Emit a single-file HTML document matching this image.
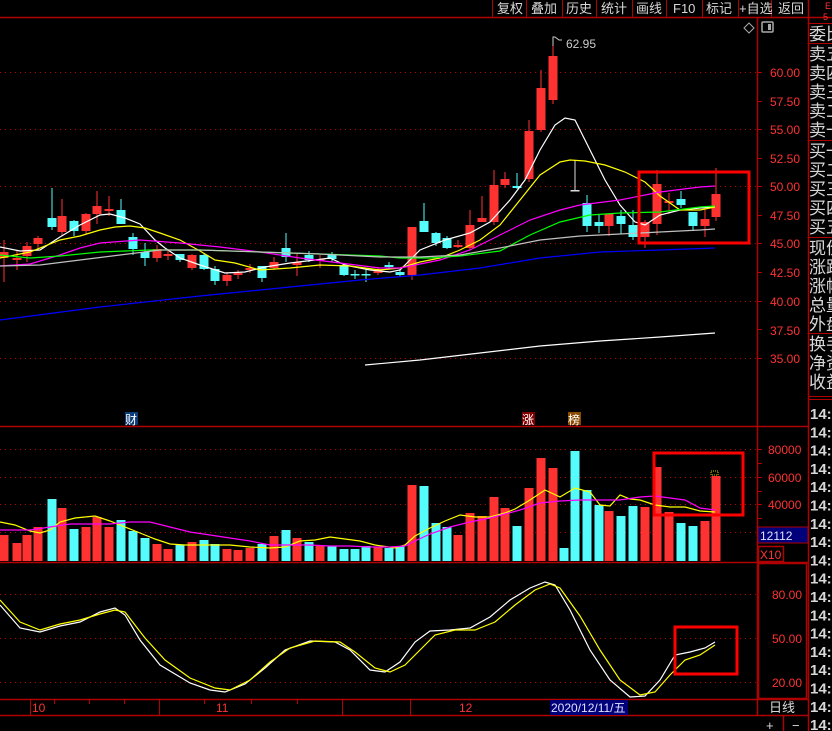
<!DOCTYPE html>
<html><head><meta charset="utf-8">
<style>
html,body{margin:0;padding:0;background:#000;width:832px;height:731px;overflow:hidden}
svg{display:block}
text{font-family:"Liberation Sans","Noto Sans CJK SC",sans-serif}
</style></head><body>
<svg id="s" width="832" height="731" viewBox="0 0 832 731" xmlns="http://www.w3.org/2000/svg">
<rect width="832" height="731" fill="#000"/>
<g id="grid" stroke="#c00000" stroke-width="1" stroke-dasharray="1,4">
<line x1="0" y1="72.5" x2="757" y2="72.5"/><line x1="0" y1="129.5" x2="757" y2="129.5"/>
<line x1="0" y1="186.5" x2="757" y2="186.5"/><line x1="0" y1="243.5" x2="757" y2="243.5"/>
<line x1="0" y1="301.5" x2="757" y2="301.5"/><line x1="0" y1="358.5" x2="757" y2="358.5"/>
<line x1="0" y1="449.5" x2="757" y2="449.5"/><line x1="0" y1="477.5" x2="757" y2="477.5"/>
<line x1="0" y1="504.5" x2="757" y2="504.5"/><line x1="0" y1="532.5" x2="757" y2="532.5"/>
<line x1="0" y1="594.5" x2="757" y2="594.5"/><line x1="0" y1="638.5" x2="757" y2="638.5"/>
<line x1="0" y1="682.5" x2="757" y2="682.5"/>
</g>
<g id="cand"></g>
<g id="lines" fill="none" stroke-width="1.2"></g>
<g stroke="#b00000" stroke-width="1.5" fill="none">
<line x1="0" y1="17.5" x2="832" y2="17.5"/>
<line x1="757.5" y1="17" x2="757.5" y2="716"/>
<line x1="808.5" y1="0" x2="808.5" y2="731"/>
<line x1="0" y1="426.5" x2="808" y2="426.5"/>
<line x1="0" y1="562.5" x2="808" y2="562.5"/>
<line x1="0" y1="699.5" x2="808" y2="699.5"/>
<line x1="0" y1="715.5" x2="808" y2="715.5"/>
<rect x="758.5" y="563.5" width="48" height="135"/>
<rect x="758.5" y="546.5" width="25" height="15"/>
<line x1="783.5" y1="716" x2="783.5" y2="731"/>
</g>
<g stroke="#b00000" stroke-width="1">
<line x1="492.5" y1="0" x2="492.5" y2="17"/><line x1="526.5" y1="0" x2="526.5" y2="17"/>
<line x1="562.5" y1="0" x2="562.5" y2="17"/><line x1="596.5" y1="0" x2="596.5" y2="17"/>
<line x1="632.5" y1="0" x2="632.5" y2="17"/><line x1="666.5" y1="0" x2="666.5" y2="17"/>
<line x1="702.5" y1="0" x2="702.5" y2="17"/><line x1="738.5" y1="0" x2="738.5" y2="17"/>
<line x1="771.5" y1="0" x2="771.5" y2="17"/>
<line x1="808" y1="23.5" x2="832" y2="23.5"/><line x1="808" y1="43.5" x2="832" y2="43.5"/>
<line x1="808" y1="140.5" x2="832" y2="140.5"/><line x1="808" y1="237.5" x2="832" y2="237.5"/>
<line x1="808" y1="333.5" x2="832" y2="333.5"/><line x1="808" y1="396.5" x2="832" y2="396.5"/>
<line x1="808" y1="399.5" x2="832" y2="399.5"/>
<g id="ticks"></g>
<line x1="30.5" y1="700" x2="30.5" y2="715"/>
<line x1="54.5" y1="700" x2="54.5" y2="704"/><line x1="89.5" y1="700" x2="89.5" y2="704"/>
<line x1="124.5" y1="700" x2="124.5" y2="704"/><line x1="204.5" y1="700" x2="204.5" y2="704"/>
<line x1="159.5" y1="700" x2="159.5" y2="715"/>
<line x1="251.5" y1="700" x2="251.5" y2="704"/><line x1="297.5" y1="700" x2="297.5" y2="704"/>
<line x1="342.5" y1="700" x2="342.5" y2="715"/>
<line x1="410.5" y1="700" x2="410.5" y2="715"/>
</g>
<g fill="#d8d8d8" font-size="13">
<text x="497" y="13">复权</text><text x="531" y="13">叠加</text><text x="566" y="13">历史</text>
<text x="601" y="13">统计</text><text x="636" y="13">画线</text><text x="673" y="13">F10</text>
<text x="706" y="13">标记</text><text x="739" y="13">+自选</text><text x="778" y="13">返回</text>
</g>
<text x="825" y="9" fill="#ff3232" font-size="9">E</text>
<text x="823" y="20" fill="#ff3232" font-size="9">5</text>
<path d="M749 23 l5 5 l-5 5 l-5 -5z" fill="none" stroke="#aaa"/>
<rect x="762" y="22" width="11" height="10" fill="none" stroke="#aaa" stroke-width="1.5" rx="1"/>
<rect x="768" y="24" width="3" height="6" fill="#aaa"/>
<g fill="#ff3232" font-size="12">
<text x="770" y="77">60.00</text><text x="770" y="106">57.50</text><text x="770" y="134">55.00</text>
<text x="770" y="163">52.50</text><text x="770" y="191">50.00</text><text x="770" y="220">47.50</text>
<text x="770" y="248">45.00</text><text x="770" y="277">42.50</text><text x="770" y="306">40.00</text>
<text x="770" y="335">37.50</text><text x="770" y="363">35.00</text>
<text x="768" y="454">80000</text><text x="768" y="482">60000</text><text x="768" y="509">40000</text>
<text x="772" y="599">80.00</text><text x="772" y="643">50.00</text><text x="772" y="687">20.00</text>
<text x="760" y="559">X10</text>
</g>
<rect x="758" y="527" width="50" height="16" fill="#00007a" stroke="#b00000"/>
<text x="760" y="540" fill="#e0e0ff" font-size="12">12112</text>
<path d="M553 46 v-9 h2 l4 3 h3" fill="none" stroke="#ccc"/>
<text x="566" y="48" fill="#ccc" font-size="12">62.95</text>
<rect x="125" y="412" width="13" height="13" fill="#0a3c78"/><text x="125" y="424" fill="#fff" font-size="12">财</text>
<rect x="522" y="412" width="13" height="13" fill="#800000"/><text x="522" y="424" fill="#fff" font-size="12">涨</text>
<rect x="568" y="412" width="13" height="13" fill="#8a4a00"/><text x="568" y="424" fill="#fff" font-size="12">榜</text>
<g fill="#ff3232" font-size="12"><text x="32" y="712">10</text><text x="216" y="712">11</text><text x="459" y="712">12</text></g>
<rect x="550" y="700" width="78" height="15" fill="#00007a"/>
<text x="551" y="712" fill="#e0e0ff" font-size="12">2020/12/11/五</text>
<text x="769" y="712" fill="#d8d8d8" font-size="13">日线</text>
<text x="766" y="730" fill="#d8d8d8" font-size="13">+</text><text x="792" y="730" fill="#d8d8d8" font-size="13">−</text>
<g fill="#d8d8d8" font-size="17">
<text x="809" y="40">委比</text>
<text x="809" y="60">卖五</text><text x="809" y="79">卖四</text><text x="809" y="98">卖三</text><text x="809" y="117">卖二</text><text x="809" y="136">卖一</text>
<text x="809" y="157">买一</text><text x="809" y="176">买二</text><text x="809" y="195">买三</text><text x="809" y="214">买四</text><text x="809" y="233">买五</text>
<text x="809" y="254">现价</text><text x="809" y="273">涨跌</text><text x="809" y="292">涨幅</text><text x="809" y="311">总量</text><text x="809" y="330">外盘</text>
<text x="809" y="350">换手</text><text x="809" y="369">净资</text><text x="809" y="388">收益</text>
</g>
<g id="tm" fill="#d8d8d8" font-size="15" font-weight="bold"></g>
<g fill="none" stroke="#ff0000" stroke-width="3">
<rect x="639" y="172" width="110" height="71"/>
<rect x="654" y="453" width="89" height="62"/>
<rect x="675" y="627" width="62" height="47"/>
</g>
<rect x="711" y="471" width="7" height="4" fill="none" stroke="#cc0" stroke-dasharray="1,1"/>
</svg>
<script>
var NS="http://www.w3.org/2000/svg";
function el(p,t,a){var e=document.createElementNS(NS,t);for(var k in a)e.setAttribute(k,a[k]);p.appendChild(e);return e;}
var R="#ff3232",C="#54fcfc";
var c=[
[4,252,258,240,282,R,535],[17,258,260,250,270,R,543],[27,246,256,242,262,R,535],[38,238,244,236,250,R,527],
[52,218,227,188,230,C,499],[62,216,232,199,236,R,508],[74,221,231,220,236,C,529],[86,214,231,213,234,R,527],
[97,206,214,191,224,R,517],[109,209,211,196,216,R,527],[121,210,224,199,224,C,520],[133,237,249,233,255,C,531],
[145,252,258,243,266,C,538],[157,249,258,245,262,R,544],[168,254,256,249,260,R,549],[180,254,260,254,262,C,545],
[192,255,268,254,270,R,542],[204,255,269,254,270,C,540],[215,269,281,266,285,C,544],[227,275,281,272,286,R,549],
[238,273,275,270,279,R,550],[250,268,270,264,273,R,548],[262,266,278,266,282,C,544],[274,262,268,257,270,R,536],
[286,248,257,233,262,C,530],[297,262,265,253,276,R,538],[309,255,260,251,262,C,542],[320,259,261,255,268,R,546],
[332,255,259,252,262,C,546],[344,265,275,264,276,C,549],[355,274,275,270,279,C,549],[366,274,275,269,282,C,546],
[378,269,273,267,275,R,547],[389,265,267,262,269,C,548],[400,272,275,269,277,C,546],
[412,227,275,227,280,R,485],[424,221,232,203,232,C,486],[436,233,243,232,246,C,523],[447,238,248,236,249,C,527],
[458,245,247,240,248,R,535],[470,225,248,210,250,R,513],[482,218,222,196,222,R,516],[494,185,222,170,225,R,497],
[505,179,185,172,188,R,508],[517,186,188,173,189,C,526],[529,131,179,120,182,R,488],[541,88,130,70,132,R,458],
[553,56,100,38,104,R,468],[564,0,0,0,0,C,548],[575,190,191,160,191,"#ddd",451],[587,203,226,195,232,C,490],
[599,222,226,214,233,C,505],[609,214,226,214,236,R,511],[621,216,224,210,234,C,516],[633,225,237,210,240,C,506],
[645,222,237,220,248,R,507],[657,184,224,170,235,R,467],[669,201,203,193,214,R,512],[681,199,205,191,208,C,523],
[693,212,226,212,231,C,526],[705,219,226,209,237,R,521],[716,194,217,168,221,R,476]];
var g=document.getElementById("cand");
c.forEach(function(d){
 var x=d[0],col=d[5];
 if(d[1]>0){
  el(g,"line",{x1:x,x2:x,y1:d[3],y2:d[4],stroke:col,"stroke-width":1});
  var h=Math.max(1.5,d[2]-d[1]);
  el(g,"rect",{x:x-4.5,y:d[1],width:9,height:h,fill:col});
 }
 el(g,"rect",{x:x-4.5,y:d[6],width:9,height:561-d[6],fill:col=="#ddd"?C:col});
});
function pl(pts,col){el(document.getElementById("lines"),"polyline",{points:pts,stroke:col});}
pl("0,247 20,251 40,250 60,237 80,225 100,215 110,214 125,218 140,224 155,240 165,248 180,258 200,265 225,273 245,272 265,267 290,263 315,260 330,258 345,265 370,270 390,272 400,270 410,260 420,250 445,240 470,233 490,222 510,200 525,180 540,150 555,125 565,118 575,120 590,150 605,180 620,205 635,222 645,225 660,215 680,210 700,208 715,207","#fff");
pl("0,258 30,252 60,240 80,236 100,230 115,227 130,226 145,228 160,233 180,240 200,251 215,260 235,263 260,270 290,268 320,265 350,266 380,270 400,268 420,262 440,258 460,250 480,240 500,225 520,200 540,175 560,162 570,160 585,161 605,165 625,172 645,182 660,196 680,210 700,210 715,207","#ffff00");
pl("0,266 30,264 60,255 80,248 100,243 140,240 180,243 220,247 260,252 300,258 340,263 380,268 400,268 420,264 440,260 470,250 500,235 530,220 560,210 580,205 620,200 660,192 700,187 715,186","#ff00ff");
pl("0,255 30,258 60,256 100,252 150,250 200,250 260,252 320,254 380,256 400,258 430,258 460,256 500,251 530,235 560,222 590,215 620,213 660,212 700,207 715,206","#00ff00");
pl("0,266 40,265 80,260 120,255 160,250 200,250 260,252 320,254 380,257 420,257 460,255 500,248 540,240 580,236 620,234 660,232 700,230 715,229","#c0c0c0");
pl("0,320 100,307 200,296 300,286 360,280 420,275 480,268 540,258 600,252 660,250 715,248","#0000ff");
pl("365,365 420,360 480,353 540,346 600,341 660,337 715,333","#fff");
pl("0,522 15,525 30,531 40,533 50,530 60,522 75,518 95,516 110,521 125,527 140,533 155,539 170,544 185,545 200,545 215,545 230,545 250,547 270,548 285,547 300,541 315,540 330,537 345,539 360,541 375,545 395,548 405,545 415,536 430,528 445,521 460,515 475,517 490,517 505,513 515,509 530,500 545,490 560,497 575,488 590,492 600,505 610,506 620,495 630,499 640,500 655,505 670,507 685,507 700,511 715,512","#ffff00");
pl("0,530 30,530 50,527 70,524 90,524 110,524 130,522 150,522 170,527 190,532 210,535 230,538 250,541 270,545 290,545 310,545 330,546 350,546 370,547 390,547 405,546 415,541 430,534 450,527 470,522 490,518 505,514 520,510 540,503 560,501 580,500 600,500 620,500 640,497 655,496 670,498 685,500 700,508 715,510","#ff00ff");
pl("0,605 20,628 40,632 60,626 80,622 100,612 115,608 125,615 140,640 160,665 190,683 210,690 225,692 245,684 265,668 285,650 310,641 335,642 350,650 370,670 385,672 400,662 415,642 430,631 450,630 470,628 490,617 510,600 530,588 545,582 555,585 570,610 590,650 610,680 630,697 645,696 660,680 675,655 690,652 705,648 715,642","#fff");
pl("0,600 20,622 40,630 60,624 80,620 100,614 115,610 125,612 145,638 165,660 190,678 215,688 230,690 250,680 270,662 290,648 315,641 340,642 355,652 375,668 390,672 405,665 420,650 435,635 455,630 475,630 495,622 515,605 535,590 550,584 560,588 580,616 600,650 620,680 640,695 655,692 670,675 685,660 700,655 715,645","#ffff00");
var tk=document.getElementById("ticks");
[72,101,129,158,186,215,243,272,301,329,358,449,463,477,491,504,518].forEach(function(y){el(tk,"line",{x1:757,x2:762,y1:y+.5,y2:y+.5});});
var tm=document.getElementById("tm");
for(var i=0;i<18;i++){var t=el(tm,"text",{x:810,y:419+i*18.3});t.textContent="14:";}
</script>
</body></html>
